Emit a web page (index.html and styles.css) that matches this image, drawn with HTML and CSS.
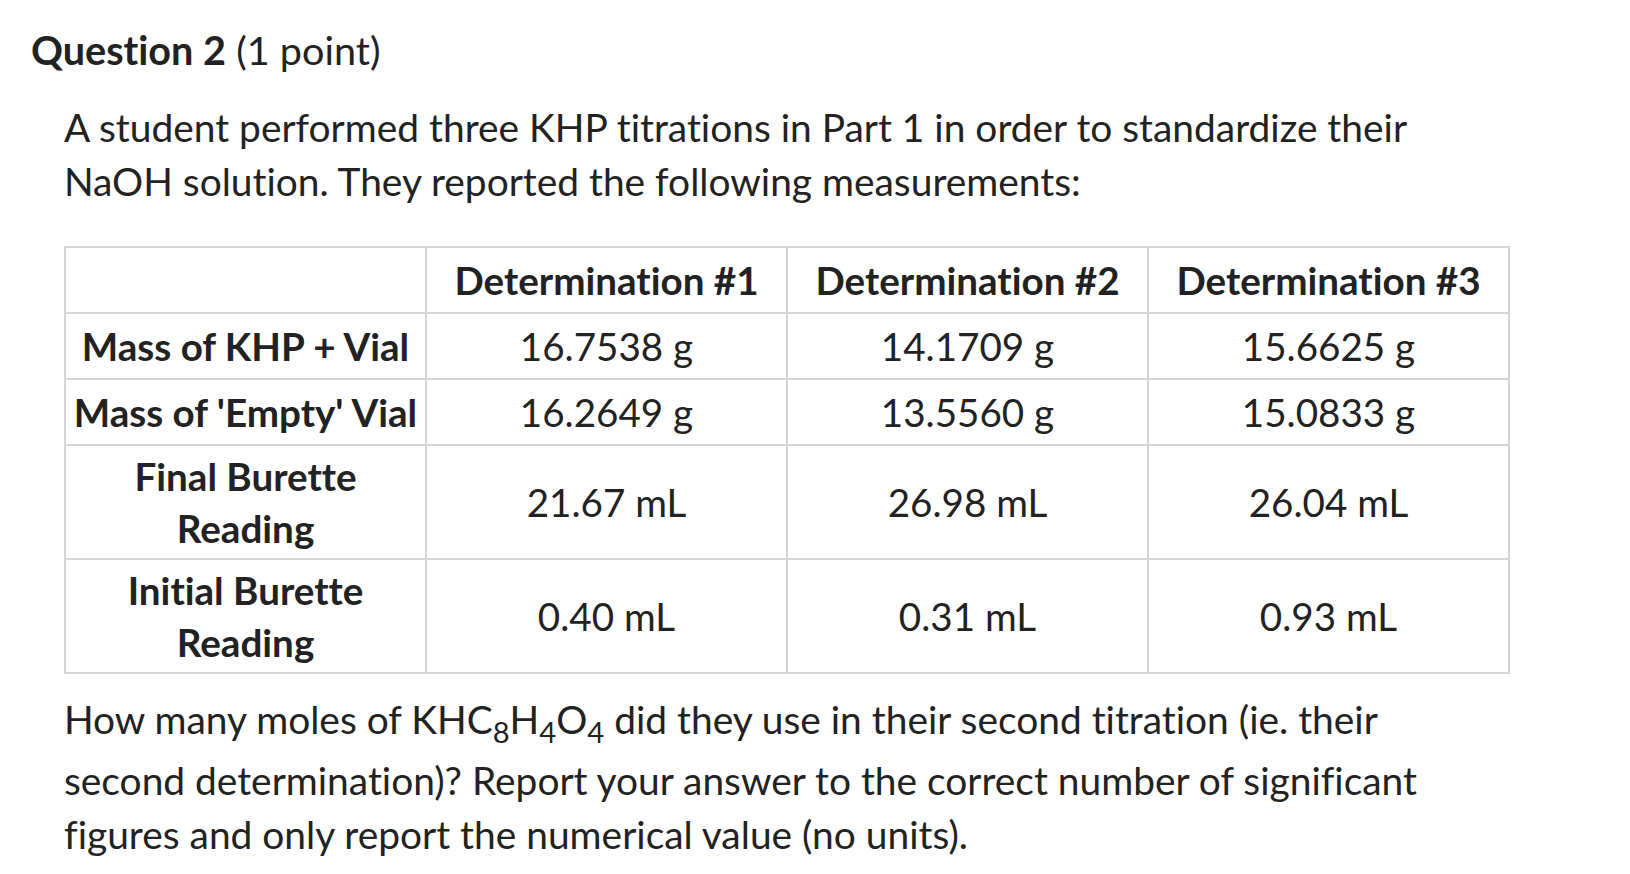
FILE: index.html
```html
<!DOCTYPE html>
<html>
<head>
<meta charset="utf-8">
<link rel="stylesheet" href="styles.css">
</head>
<body>
<div class="question">
  <h2 class="q-title"><span class="q-num">Question 2</span> <span class="q-pts">(1 point)</span></h2>
  <div class="q-body">
    <p class="intro">A student performed three KHP titrations in Part 1 in order to standardize their NaOH solution. They reported the following measurements:</p>
    <table class="data">
      <tr>
        <th></th>
        <th>Determination #1</th>
        <th>Determination #2</th>
        <th>Determination #3</th>
      </tr>
      <tr>
        <th class="rowh">Mass of KHP + Vial</th>
        <td>16.7538 g</td>
        <td>14.1709 g</td>
        <td>15.6625 g</td>
      </tr>
      <tr>
        <th class="rowh">Mass of 'Empty' Vial</th>
        <td>16.2649 g</td>
        <td>13.5560 g</td>
        <td>15.0833 g</td>
      </tr>
      <tr>
        <th class="rowh two">Final Burette<br>Reading</th>
        <td>21.67 mL</td>
        <td>26.98 mL</td>
        <td>26.04 mL</td>
      </tr>
      <tr>
        <th class="rowh two">Initial Burette<br>Reading</th>
        <td>0.40 mL</td>
        <td>0.31 mL</td>
        <td>0.93 mL</td>
      </tr>
    </table>
    <p class="ask">How many moles of KHC<sub>8</sub>H<sub>4</sub>O<sub>4</sub> did they use in their second titration (ie. their second determination)? Report your answer to the correct number of significant figures and only report the numerical value (no units).</p>
  </div>
</div>
</body>
</html>
```

FILE: styles.css
```css
html, body {
  margin: 0;
  padding: 0;
  background: #ffffff;
}
body {
  font-family: Lato, "Open Sans", sans-serif;
  color: #222222;
  font-variant-ligatures: none;
  font-feature-settings: "liga" 0, "clig" 0, "dlig" 0;
}
.question {
  padding: 26px 0 0 31px;
}
.q-title {
  margin: 0;
  font-size: 39.6px;
  line-height: 48px;
  font-weight: 400;
}
.q-num {
  font-weight: 700;
}
.q-body {
  padding-left: 33px;
  width: 1446px;
}
.intro {
  margin: 26px 0 0 0;
  font-size: 38.9px;
  line-height: 54px;
  width: 1400px;
}
.data {
  margin-top: 38px;
  border-collapse: collapse;
  border: 2px solid #858585;
  width: 1446px;
  table-layout: fixed;
  font-size: 38.6px;
  line-height: 48px;
}
.data th, .data td {
  border: 2px solid #d5d5d5;
  padding: 8px 2px;
  text-align: center;
  vertical-align: middle;
}
.data th {
  font-weight: 700;
}
.data th.two {
  line-height: 52px;
  padding: 4px 2px;
}
.data td {
  font-weight: 400;
}
.ask {
  margin: 18px 0 0 0;
  font-size: 38.9px;
  line-height: 54px;
  width: 1400px;
}
.ask sub {
  font-size: 0.75em;
  line-height: 42px;
}
```
